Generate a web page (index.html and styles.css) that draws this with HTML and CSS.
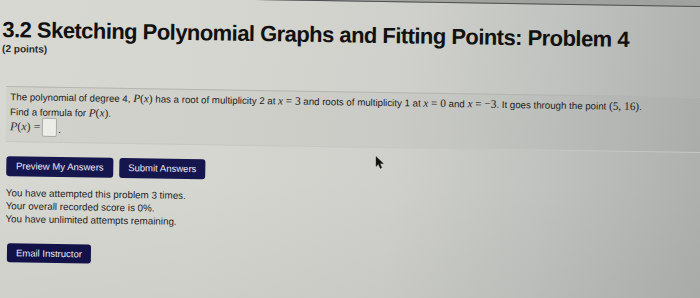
FILE: index.html
```html
<!DOCTYPE html>
<html lang="en">
<head>
<meta charset="utf-8">
<title>3.2 Sketching Polynomial Graphs and Fitting Points: Problem 4</title>
<link rel="stylesheet" href="styles.css">
</head>
<body>
<div class="screen">
  <header class="head">
    <h1 class="title">3.2 Sketching Polynomial Graphs and Fitting Points: Problem 4</h1>
    <div class="points">(2 points)</div>
  </header>

  <section class="problem">
    <p class="line">The polynomial of degree 4, <span class="m">P</span><span class="mr">(</span><span class="m">x</span><span class="mr">)</span> has a root of multiplicity 2 at <span class="m">x</span> <span class="mr">= 3</span> and roots of multiplicity 1 at <span class="m">x</span> <span class="mr">= 0</span> and <span class="m">x</span> <span class="mr">= −3</span>. It goes through the point <span class="mr">(5, 16)</span>.</p>
    <p class="line">Find a formula for <span class="m">P</span><span class="mr">(</span><span class="m">x</span><span class="mr">)</span>.</p>
    <div class="answer"><span class="m big">P</span><span class="mr big">(</span><span class="m big">x</span><span class="mr big">) =</span><span class="input"></span><span class="dot">.</span></div>
  </section>

  <div class="actions">
    <button class="btn btn-preview">Preview My Answers</button>
    <button class="btn btn-submit">Submit Answers</button>
  </div>

  <div class="status">
    <p>You have attempted this problem 3 times.</p>
    <p>Your overall recorded score is 0%.</p>
    <p>You have unlimited attempts remaining.</p>
  </div>

  <div class="email">
    <button class="btn btn-email">Email Instructor</button>
  </div>
</div>

<svg class="cursor" width="9" height="13" viewBox="0 0 9 13" aria-hidden="true">
  <path d="M1 0.5 L1 10.5 L3.4 8.3 L5.2 12.4 L6.8 11.7 L5.1 7.7 L8.4 7.6 Z" fill="#111" stroke="#333" stroke-width="0.4"/>
</svg>
</body>
</html>
```

FILE: styles.css
```css
html, body {
  margin: 0;
  padding: 0;
  overflow: hidden;
}

html {
  width: 700px;
  height: 298px;
}

body {
  width: 700px;
  height: 298px;
  background: #9fa29f;
  font-family: "Liberation Sans", Arial, Helvetica, sans-serif;
  color: #1d1d1d;
  position: relative;
}

.screen {
  width: 724px;
  height: 300px;
  margin-top: -5px;
  padding-top: 4px;
  border-top: 1px solid #4d504e;
  box-sizing: content-box;
  transform: rotate(0.9deg);
  transform-origin: 0 0;
  background:
    linear-gradient(180deg, rgba(255,255,255,0) 60%, rgba(120,120,115,0.08) 100%),
    linear-gradient(97deg, #d8d8d2 0%, #d6d6d0 30%, #cfd0cb 55%, #bfc2be 75%, #a9aca9 100%);
}

.head {
  padding-left: 3px;
}

.title {
  margin: 17px 0 0;
  font-size: 22px;
  line-height: 25px;
  font-weight: bold;
  color: #111;
  letter-spacing: -0.55px;
}

.points {
  margin-top: 1px;
  font-size: 10px;
  line-height: 11px;
  font-weight: bold;
  color: #2a2a2a;
}

.problem {
  margin: 32px 0 0 8px;
  padding: 2px 0 5px 4px;
  border-top: 1px solid #b4b6b1;
  border-bottom: 1px solid #c6c8c3;
  background: rgba(120, 122, 118, 0.06);
}

.line {
  margin: 0;
  font-size: 9.7px;
  line-height: 15px;
  color: #222;
  white-space: nowrap;
}

.m {
  font-family: "Liberation Serif", "Times New Roman", serif;
  font-style: italic;
  font-size: 11.3px;
}

.mr {
  font-family: "Liberation Serif", "Times New Roman", serif;
  font-size: 11.3px;
}

.answer {
  display: flex;
  align-items: center;
  height: 19px;
  margin-top: -2px;
}

.big {
  font-size: 12px;
  color: #333;
}

.input {
  display: inline-block;
  width: 13px;
  height: 17px;
  margin-left: 2px;
  border: 1px solid #a9aaa6;
  border-radius: 2px;
  background: #ecece8;
}

.dot {
  font-size: 10px;
  margin-left: 1px;
  align-self: flex-end;
  line-height: 14px;
}

.actions {
  display: flex;
  gap: 6px;
  margin: 14px 0 0 9px;
}

.btn {
  height: 20px;
  padding: 0 9px;
  border: none;
  border-radius: 3px;
  background: #16164f;
  color: #e9e9f2;
  font-family: "Liberation Sans", Arial, Helvetica, sans-serif;
  font-size: 9.5px;
  line-height: 20px;
  white-space: nowrap;
  cursor: pointer;
}

.btn-preview {
  width: 107px;
  padding: 0;
}

.btn-submit {
  width: 86px;
  padding: 0;
}

.status {
  margin: 10px 0 0 9px;
  font-size: 9.8px;
  line-height: 13px;
  color: #1f1f1f;
}

.status p {
  margin: 0;
}

.email {
  margin: 17px 0 0 11px;
}

.btn-email {
  width: 84px;
  height: 19px;
  padding: 0;
  line-height: 19px;
  background: #121248;
}

.cursor {
  position: absolute;
  left: 375px;
  top: 156px;
}
```
